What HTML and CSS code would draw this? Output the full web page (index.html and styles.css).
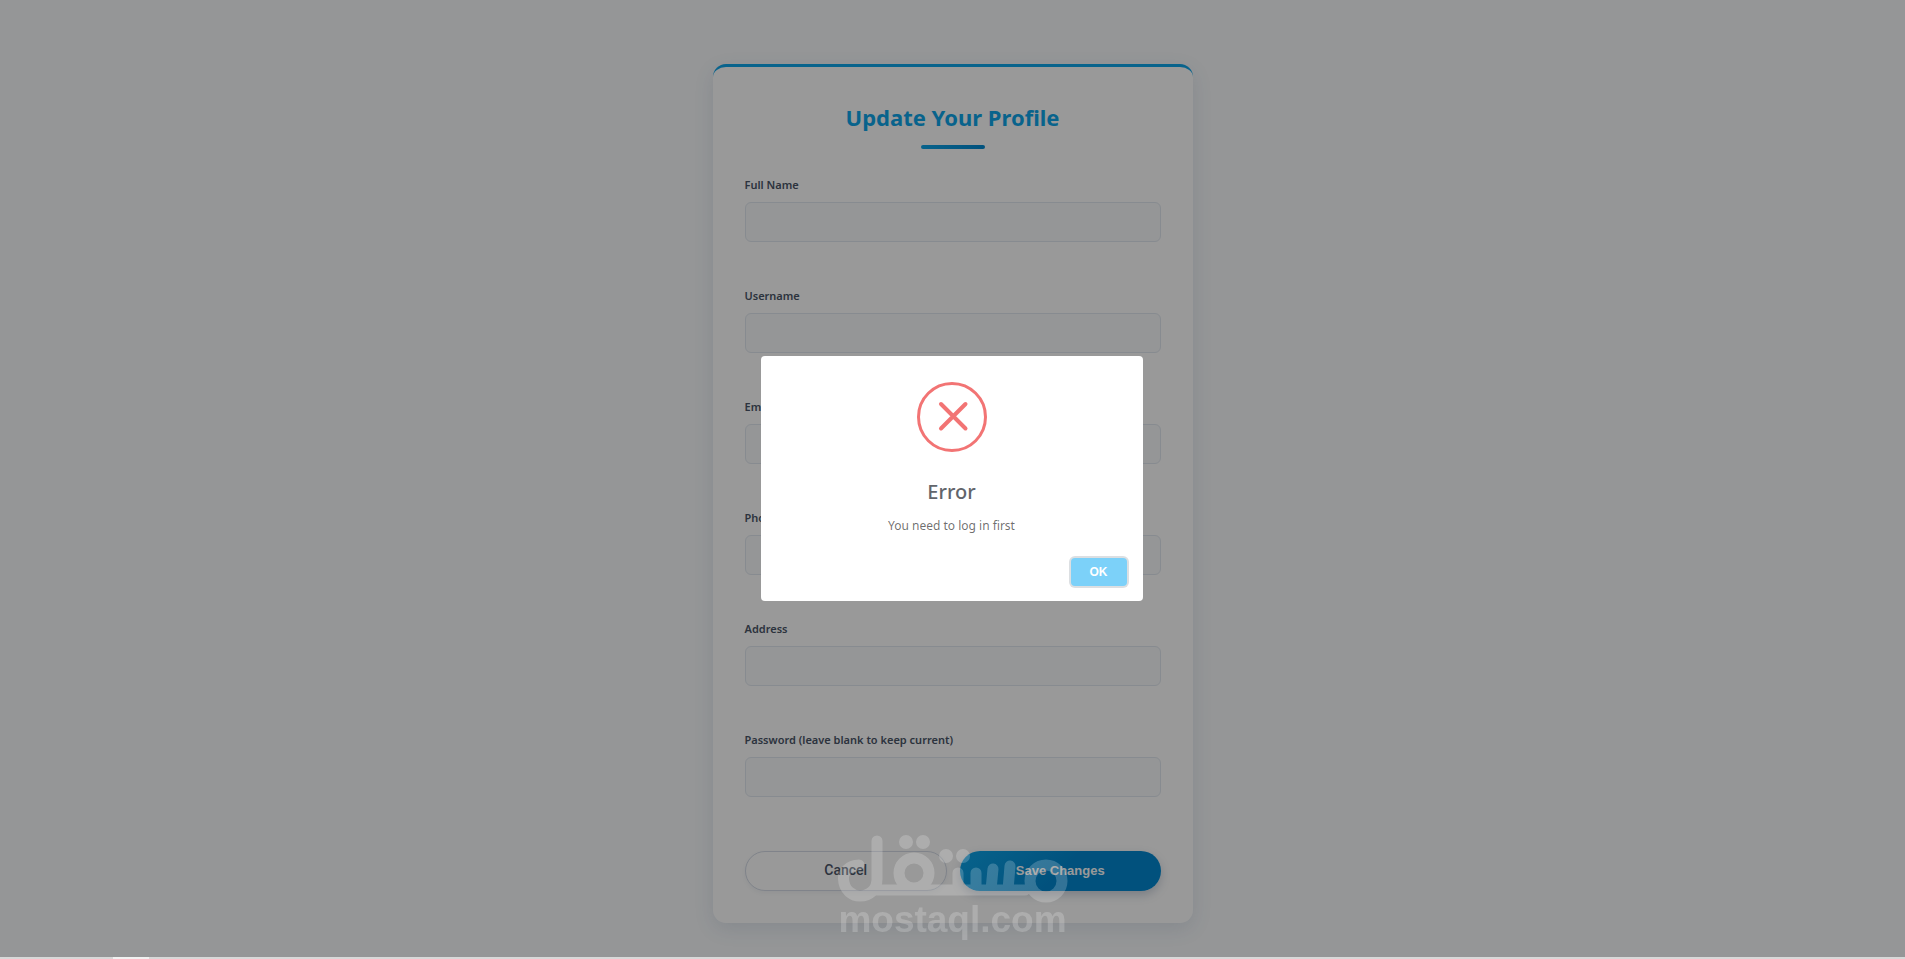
FILE: index.html
```html
<!DOCTYPE html>
<html lang="en">
<head>
<meta charset="utf-8">
<title>Update Your Profile</title>
<link rel="stylesheet" href="styles.css">
</head>
<body>
<main class="page">
  <form class="card">
    <h1 class="title">Update Your Profile</h1>
    <div class="field"><label for="name">Full Name</label><input id="name" type="text"></div>
    <div class="field"><label for="user">Username</label><input id="user" type="text"></div>
    <div class="field"><label for="email">Email</label><input id="email" type="email"></div>
    <div class="field"><label for="phone">Phone</label><input id="phone" type="tel"></div>
    <div class="field"><label for="address">Address</label><input id="address" type="text"></div>
    <div class="field"><label for="password">Password (leave blank to keep current)</label><input id="password" type="password"></div>
    <div class="actions">
      <button class="btn cancel" type="button">Cancel</button>
      <button class="btn save" type="button">Save Changes</button>
    </div>
  </form>
</main>
<div class="taskbar"><span class="taskbar-active"></span></div>
<div class="overlay">
  <section class="modal" role="alertdialog" aria-labelledby="modal-title" aria-describedby="modal-text">
    <svg class="error-icon" viewBox="0 0 70 70" aria-hidden="true">
      <circle cx="35" cy="35" r="33.5"/>
      <path d="M24 22 48.500 46.500M48.500 22 24 46.500"/>
    </svg>
    <h2 id="modal-title" class="modal-title">Error</h2>
    <p id="modal-text" class="modal-text">You need to log in first</p>
    <div class="modal-footer"><button class="ok" type="button">OK</button></div>
  </section>
</div>
<div class="watermark">
  <svg class="watermark-logo" viewBox="0 0 230 68" role="img" aria-label="mostaql">
    <g fill="none" stroke="#fff" stroke-width="11" stroke-linecap="round" stroke-linejoin="round">
      <path d="M21 30C10 30 5 38 5.500 44C6 55 14 61 22 61C32 61 39 54 39 44V6"/>
      <circle cx="76" cy="38" r="15"/>
      <circle cx="208" cy="46" r="16"/>
      <path d="M39 55H187M120 55V38M138 55V38M153 55 155 34M170 55 172 31"/>
    </g>
    <g fill="#fff"><circle cx="68" cy="7" r="7"/><circle cx="85" cy="7" r="7"/><circle cx="108" cy="21" r="7"/><circle cx="125" cy="21" r="7"/></g>
  </svg>
  <span class="watermark-text">mostaql.com</span>
</div>
</body>
</html>
```
FILE: styles.css
```css
* { box-sizing: border-box; }
body {
  margin: 0;
  min-height: 100vh;
  display: flex;
  flex-direction: column;
  background: #f8fafc;
  font-family: "Segoe UI", "Noto Sans", "Open Sans", sans-serif;
}
.page { flex: 1; padding: 64px 16px 34px; }
.card {
  max-width: 480px;
  margin: 0 auto;
  padding: 35px 32px 32px;
  background: #fff;
  border-top: 3px solid #0ea5e9;
  border-radius: 13px;
  box-shadow: 0 6px 20px rgba(50, 80, 120, .12);
}
.title {
  margin: 0 0 27px;
  display: flex;
  flex-direction: column;
  align-items: center;
  gap: 13px;
  color: #0ea5e9;
  font-size: 22px;
  line-height: 30px;
}
.title::after {
  content: "";
  width: 64px;
  height: 4px;
  border-radius: 2px;
  background: linear-gradient(90deg, #0ea5e9, #0288d1);
}
.field { margin-bottom: 45px; }
.field label {
  display: block;
  margin-bottom: 8px;
  color: #4a5568;
  font-size: 11px;
  font-weight: 600;
  line-height: 18px;
}
.field input {
  display: block;
  width: 100%;
  height: 40px;
  padding: 0 12px;
  border: 1px solid #e2e8f0;
  border-radius: 6px;
  background: #f8fafc;
  font: inherit;
}
.actions { display: flex; gap: 13px; padding-top: 9px; }
.btn {
  flex: 1;
  height: 40px;
  padding: 0 12px 2px;
  border: 0;
  border-radius: 20px;
  font-size: 13px;
}
.cancel {
  border: 1px solid #d5dbe6;
  background: #fff;
  color: #4a5568;
  font-family: Roboto, sans-serif;
  font-size: 14px;
  font-weight: 500;
  box-shadow: 0 2px 4px rgba(50, 80, 120, .06);
}
.save {
  background: linear-gradient(135deg, #0ea5e9, #0288d1 50%);
  color: #fff;
  font-family: "Liberation Sans", Arial, sans-serif;
  font-weight: 700;
  box-shadow: 0 4px 10px rgba(50, 80, 120, .25);
}
.taskbar { height: 2px; padding-left: 113px; background: #d8d8d8; position: relative; z-index: 2; }
.taskbar-active { display: block; width: 36px; height: 2px; background: #f2f2f2; }
.overlay {
  position: fixed;
  inset: 0;
  display: flex;
  align-items: center;
  justify-content: center;
  padding: 0 2px 2px 0;
  background: rgba(0, 0, 0, .4);
}
.modal {
  width: 382px;
  padding: 26px 14px 13px;
  border-radius: 4px;
  background: #fff;
  text-align: center;
}
.error-icon {
  display: block;
  width: 70px;
  height: 70px;
  margin: 0 auto;
  fill: none;
  stroke: #f27474;
  stroke-width: 3;
}
.error-icon path { stroke-width: 4; stroke-linecap: round; }
.modal-title {
  margin: 23px 0 9px;
  color: #62656b;
  font-size: 20px;
  font-weight: 500;
  line-height: 34px;
}
.modal-text { margin: 0 0 22px; color: rgba(0, 0, 0, .58); font-size: 12px; line-height: 16px; }
.modal-footer { display: flex; justify-content: flex-end; padding: 2px; }
.ok {
  width: 56px;
  height: 28px;
  border: 0;
  border-radius: 4px;
  background: #7cd1f9;
  color: #fff;
  font: 700 12px "Liberation Sans", Arial, sans-serif;
  box-shadow: 0 0 0 2px #dcdfe2;
}
.watermark {
  position: fixed;
  left: 50%;
  bottom: 22px;
  width: 230px;
  margin-left: -115px;
  opacity: .2;
  color: #fff;
  pointer-events: none;
  z-index: 3;
}
.watermark-logo { display: block; width: 230px; height: 68px; }
.watermark-text {
  display: block;
  font: 700 37px/34px "Liberation Sans", Arial, sans-serif;
  text-align: center;
}
```
